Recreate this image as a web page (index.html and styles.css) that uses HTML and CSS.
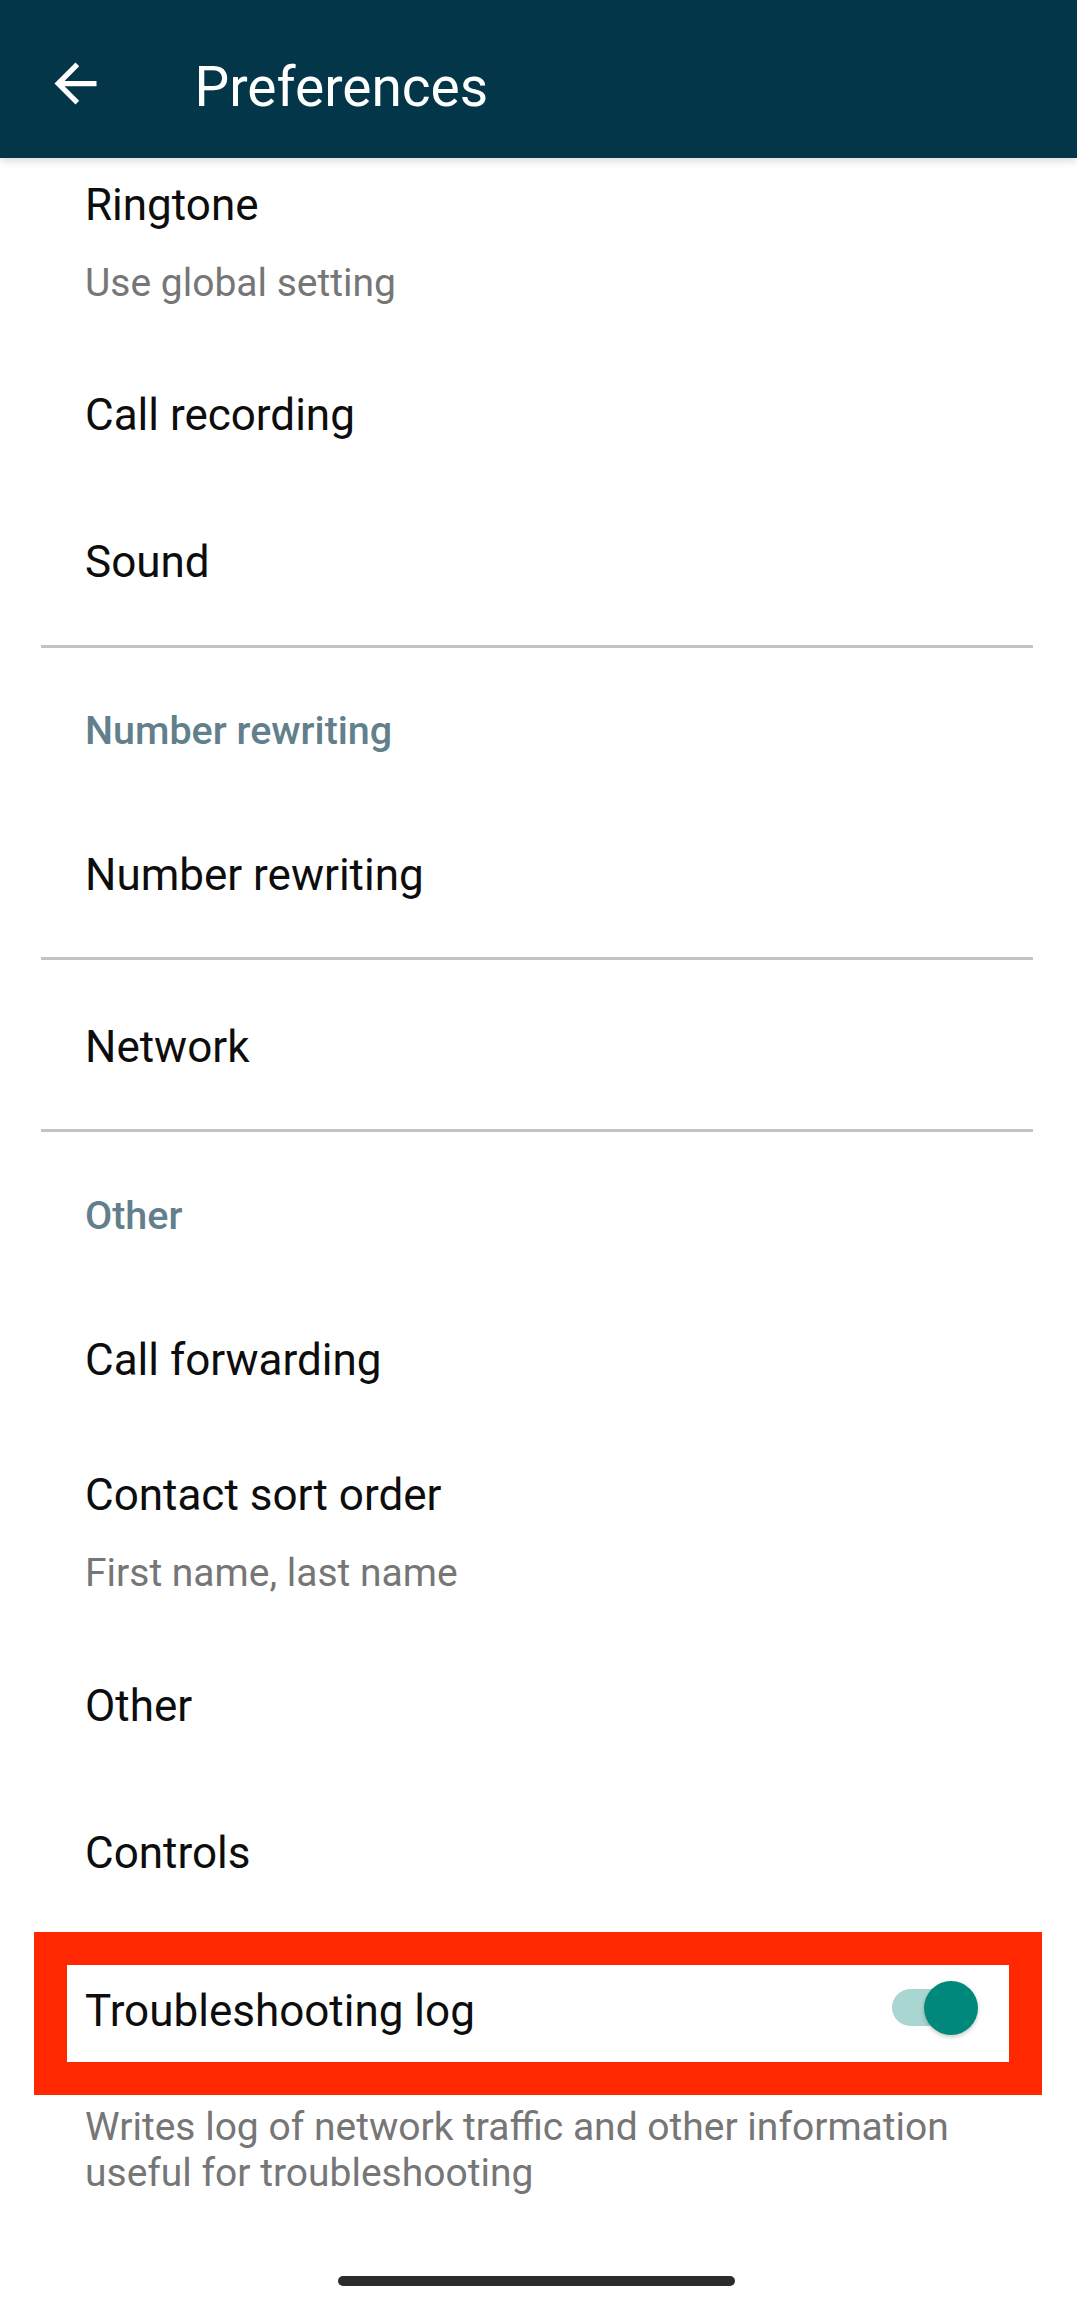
FILE: index.html
```html
<!DOCTYPE html>
<html lang="en">
<head>
<meta charset="utf-8">
<title>Preferences</title>
<link rel="stylesheet" href="styles.css">
</head>
<body>
<header class="appbar">
  <svg class="back" viewBox="0 0 24 24" width="63" height="63" aria-hidden="true">
    <path d="M20 11H7.83l5.59-5.59L12 4l-8 8 8 8 1.41-1.41L7.83 13H20v-2z" fill="#ffffff"/>
  </svg>
  <h1 class="appbar-title">Preferences</h1>
</header>

<main class="list">
  <div class="pref two first">
    <div class="pref-title">Ringtone</div>
    <div class="pref-summary">Use global setting</div>
  </div>
  <div class="pref one"><div class="pref-title">Call recording</div></div>
  <div class="pref one"><div class="pref-title">Sound</div></div>

  <div class="divider"></div>
  <div class="category">Number rewriting</div>
  <div class="pref one"><div class="pref-title">Number rewriting</div></div>

  <div class="divider"></div>
  <div class="pref one"><div class="pref-title">Network</div></div>

  <div class="divider"></div>
  <div class="category">Other</div>
  <div class="pref one"><div class="pref-title">Call forwarding</div></div>
  <div class="pref two">
    <div class="pref-title">Contact sort order</div>
    <div class="pref-summary">First name, last name</div>
  </div>
  <div class="pref one"><div class="pref-title">Other</div></div>
  <div class="pref one"><div class="pref-title">Controls</div></div>

  <div class="pref switch-pref">
    <div class="switch-line">
      <div class="pref-title">Troubleshooting log</div>
      <div class="switch" role="switch" aria-checked="true">
        <span class="track"></span>
        <span class="thumb"></span>
      </div>
    </div>
    <div class="pref-summary long">Writes log of network traffic and other information<br>useful for troubleshooting</div>
    <div class="highlight"></div>
  </div>
</main>

<div class="home-bar"></div>
</body>
</html>
```

FILE: styles.css
```css
html, body {
  margin: 0;
  padding: 0;
}

body {
  width: 1077px;
  height: 2304px;
  overflow: hidden;
  position: relative;
  background: #ffffff;
  font-family: Roboto, "Liberation Sans", sans-serif;
  color: #0d0d0d;
}

/* App bar */
.appbar {
  position: relative;
  z-index: 2;
  box-sizing: border-box;
  height: 158px;
  padding: 8px 0 0 44px;
  display: flex;
  align-items: center;
  background: #04364a;
  box-shadow: 0 3px 8px rgba(0, 0, 0, 0.14);
}

.back {
  flex: none;
  display: block;
}

.appbar-title {
  margin: 7px 0 0 87.5px;
  font-size: 55px;
  line-height: 64px;
  font-weight: 400;
  color: #ffffff;
}

/* List */
.list {
  overflow: hidden;
  height: 2146px;
}

.pref {
  padding-left: 85px;
  padding-right: 42px;
}

.pref.one {
  padding-top: 45.5px;
  padding-bottom: 45.5px;
}

.pref.two {
  padding-top: 34px;
  padding-bottom: 35.2px;
}

.pref.first {
  margin-top: -15.5px;
}

.pref-title {
  font-size: 44px;
  line-height: 56px;
  color: #0d0d0d;
  white-space: nowrap;
}

.pref-summary {
  margin-top: 26px;
  font-size: 39px;
  line-height: 48px;
  color: #767676;
  white-space: nowrap;
}

.divider {
  height: 3px;
  margin: 9px 44px 13px 41px;
  background: #c3c3c3;
}

.category {
  padding: 46.8px 42px 46px 85px;
  font-size: 39.5px;
  line-height: 48px;
  font-weight: 500;
  color: #627f8c;
}

/* Switch preference */
.switch-pref {
  position: relative;
  padding-top: 57px;
  padding-right: 99px;
}

.switch-line {
  display: flex;
  align-items: flex-start;
  justify-content: space-between;
}

.switch {
  position: relative;
  flex: none;
  width: 86px;
  height: 54px;
  margin-top: -2.5px;
}

.track {
  position: absolute;
  left: 0;
  top: 8.5px;
  width: 80px;
  height: 37px;
  border-radius: 18.5px;
  background: #a9d6d1;
}

.thumb {
  position: absolute;
  right: 0;
  top: 0;
  width: 54px;
  height: 54px;
  border-radius: 50%;
  background: #00897b;
  box-shadow: 0 2px 4px rgba(0, 0, 0, 0.22);
}

.pref-summary.long {
  margin-top: 65px;
  line-height: 46px;
}

/* Red annotation frame */
.highlight {
  position: absolute;
  left: 34px;
  top: 5.5px;
  width: 1008px;
  height: 163px;
  box-sizing: border-box;
  border: 33px solid #ff2800;
  pointer-events: none;
}

/* System gesture bar */
.home-bar {
  position: absolute;
  left: 338px;
  bottom: 18px;
  width: 397px;
  height: 10px;
  border-radius: 5px;
  background: #2b2b2b;
}
```
